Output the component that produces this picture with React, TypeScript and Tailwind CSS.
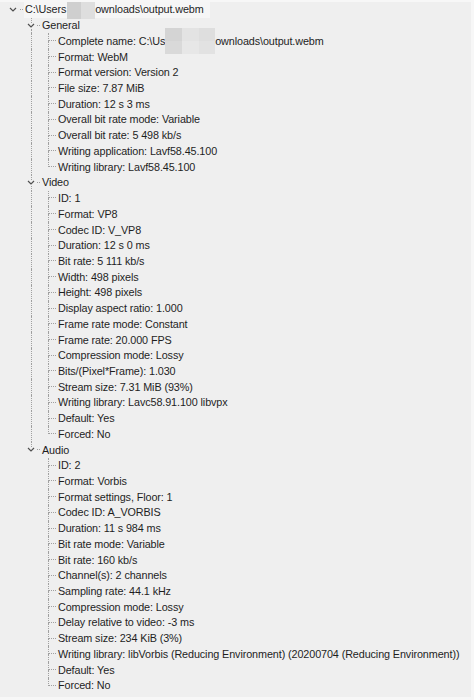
import React from "react";

type Section = { name: string; items: string[] };

const sections: Section[] = [
  {
    name: "General",
    items: [
      "__complete__",
      "Format: WebM",
      "Format version: Version 2",
      "File size: 7.87 MiB",
      "Duration: 12 s 3 ms",
      "Overall bit rate mode: Variable",
      "Overall bit rate: 5 498 kb/s",
      "Writing application: Lavf58.45.100",
      "Writing library: Lavf58.45.100",
    ],
  },
  {
    name: "Video",
    items: [
      "ID: 1",
      "Format: VP8",
      "Codec ID: V_VP8",
      "Duration: 12 s 0 ms",
      "Bit rate: 5 111 kb/s",
      "Width: 498 pixels",
      "Height: 498 pixels",
      "Display aspect ratio: 1.000",
      "Frame rate mode: Constant",
      "Frame rate: 20.000 FPS",
      "Compression mode: Lossy",
      "Bits/(Pixel*Frame): 1.030",
      "Stream size: 7.31 MiB (93%)",
      "Writing library: Lavc58.91.100 libvpx",
      "Default: Yes",
      "Forced: No",
    ],
  },
  {
    name: "Audio",
    items: [
      "ID: 2",
      "Format: Vorbis",
      "Format settings, Floor: 1",
      "Codec ID: A_VORBIS",
      "Duration: 11 s 984 ms",
      "Bit rate mode: Variable",
      "Bit rate: 160 kb/s",
      "Channel(s): 2 channels",
      "Sampling rate: 44.1 kHz",
      "Compression mode: Lossy",
      "Delay relative to video: -3 ms",
      "Stream size: 234 KiB (3%)",
      "Writing library: libVorbis (Reducing Environment) (20200704 (Reducing Environment))",
      "Default: Yes",
      "Forced: No",
    ],
  },
];

const line = "border-l border-dotted border-[#a0a0a0]";

function Chevron() {
  return (
    <svg width="12" height="6" viewBox="0 0 12 6" className="shrink-0">
      <path d="M3 1 L6 4 L9 1" fill="none" stroke="#505050" strokeWidth="1.2" />
    </svg>
  );
}

function Redacted({ className, wide }: { className: string; wide?: boolean }) {
  // pixelated blur over the user name
  return (
    <span className={`relative inline-block h-full shrink-0 align-top ${className}`}>
      {wide ? (
        <span className="absolute -top-[5px] -bottom-[5px] left-0 right-0 grid grid-cols-3 grid-rows-2">
          <span className="bg-[#d4d4d4]" />
          <span className="bg-[#e3e3e3]" />
          <span className="bg-[#dedede]" />
          <span className="bg-[#d9d9d9]" />
          <span className="bg-[#e7e7e7]" />
          <span className="bg-[#e2e2e2]" />
        </span>
      ) : (
        <span className="absolute top-0 -bottom-[1px] left-0 right-0 grid grid-cols-2">
          <span className="bg-[#cfcfcf]" />
          <span className="bg-[#dedede]" />
        </span>
      )}
    </span>
  );
}

function RootRow() {
  return (
    <div className="flex h-[15.72px] shrink-0 items-center">
      <div className="w-[6px] shrink-0" />
      <div className="flex w-[13px] shrink-0 justify-center">
        <Chevron />
      </div>
      <div className="ml-[1px] w-[3px] shrink-0 border-t border-dotted border-[#a0a0a0]" />
      <span className="ml-[1px] flex h-full items-center whitespace-nowrap bg-[#f6f6f6] pr-[6px] pl-[1px]">
        C:\Users
        <Redacted className="ml-[1px] w-[28px]" />
        ownloads\output.webm
      </span>
    </div>
  );
}

function SectionRow({ name, last }: { name: string; last: boolean }) {
  return (
    <div className="flex h-[15.72px] shrink-0 items-center">
      <div className="w-[25px] shrink-0" />
      <div className="flex h-full w-[12px] shrink-0 flex-col">
        <div className={`ml-[6px] flex-1 ${line}`} />
        <Chevron />
        <div className={`ml-[6px] flex-1 ${last ? "" : line}`} />
      </div>
      <div className="w-[3px] shrink-0 border-t border-dotted border-[#a0a0a0]" />
      <span className="ml-[2px] whitespace-nowrap">{name}</span>
    </div>
  );
}

function ItemRow({
  text,
  sectionLast,
  itemLast,
}: {
  text: string;
  sectionLast: boolean;
  itemLast: boolean;
}) {
  return (
    <div className="flex h-[15.72px] shrink-0 items-center">
      <div className="w-[31px] shrink-0" />
      <div className={`h-full w-[17px] shrink-0 ${sectionLast ? "" : line}`} />
      <div className="flex h-full w-[8px] shrink-0 flex-col">
        <div className={`h-1/2 border-b border-dotted border-[#a0a0a0] ${line}`} />
        <div className={`h-1/2 ${itemLast ? "" : line}`} />
      </div>
      <span className="ml-[2px] flex h-full items-center whitespace-nowrap">
        {text === "__complete__" ? (
          <>
            Complete name: C:\Us
            <Redacted className="w-[50px]" wide />
            ownloads\output.webm
          </>
        ) : (
          text
        )}
      </span>
    </div>
  );
}

export default function App() {
  return (
    <div
      className="relative h-[700px] w-[474px] overflow-hidden bg-[#efefef] text-[10.8px] leading-none tracking-[-0.1px] text-[#1e1e1e]"
      style={{ fontFamily: '"Liberation Sans", Arial, sans-serif' }}
    >
      <div className="flex h-full flex-col border-t-[2px] border-r-[3px] border-b-[3px] border-[#f7f7f7]">
        <RootRow />
        {sections.map((s, si) => {
          const sectionLast = si === sections.length - 1;
          return (
            <React.Fragment key={s.name}>
              <SectionRow name={s.name} last={sectionLast} />
              {s.items.map((it, ii) => (
                <ItemRow
                  key={s.name + ii}
                  text={it}
                  sectionLast={sectionLast}
                  itemLast={ii === s.items.length - 1}
                />
              ))}
            </React.Fragment>
          );
        })}
      </div>
    </div>
  );
}
